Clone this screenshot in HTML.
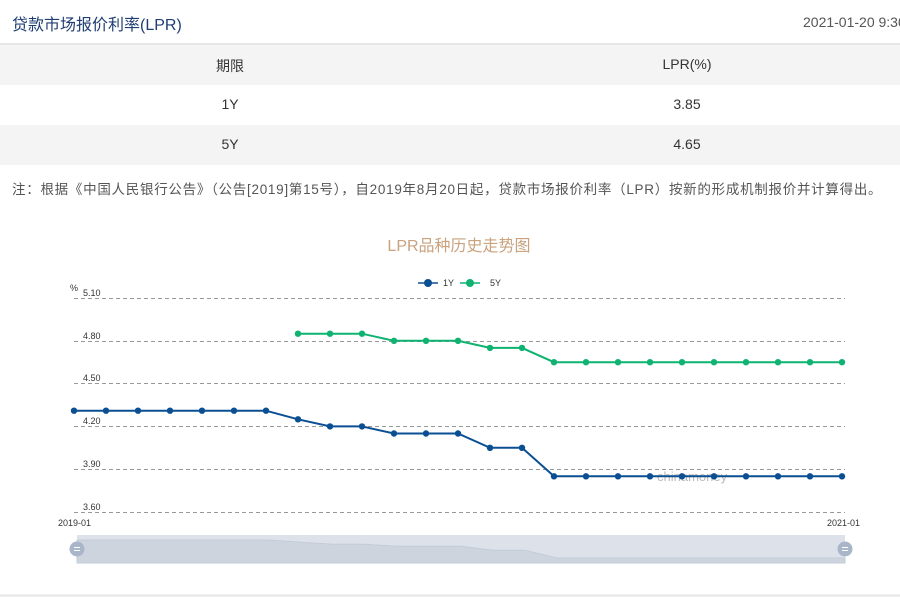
<!DOCTYPE html>
<html><head><meta charset="utf-8"><style>
*{margin:0;padding:0;box-sizing:border-box}
body{width:900px;height:597px;overflow:hidden;background:#fff;font-family:"Liberation Sans","Noto Sans CJK SC",sans-serif;position:relative;color:#333}
.abs{position:absolute}
</style></head><body>
<div class="abs" style="left:12px;top:11px;font-size:16px;color:#1f3e72">贷款市场报价利率(LPR)</div>
<div class="abs" style="left:803px;top:14px;font-size:14px;color:#555;white-space:nowrap">2021-01-20 9:30</div>
<div class="abs" style="left:0;top:43px;width:900px;height:2px;background:#e6e6e6"></div>
<div class="abs" style="left:0;top:45px;width:900px;height:40px;background:#f4f4f4"></div>
<div class="abs" style="left:0;top:125px;width:900px;height:40px;background:#f4f4f4"></div>
<div class="abs" style="left:0;top:56px;width:460px;text-align:center;font-size:14px">期限</div>
<div class="abs" style="left:460px;top:56px;width:454px;text-align:center;font-size:14px">LPR(%)</div>
<div class="abs" style="left:0;top:96px;width:460px;text-align:center;font-size:14px">1Y</div>
<div class="abs" style="left:460px;top:96px;width:454px;text-align:center;font-size:14px">3.85</div>
<div class="abs" style="left:0;top:136px;width:460px;text-align:center;font-size:14px">5Y</div>
<div class="abs" style="left:460px;top:136px;width:454px;text-align:center;font-size:14px">4.65</div>
<div class="abs" style="left:12px;top:178px;font-size:13.5px;letter-spacing:0.72px;color:#555;white-space:nowrap">注：根据《中国人民银行公告》（公告[2019]第15号），自2019年8月20日起，贷款市场报价利率（LPR）按新的形成机制报价并计算得出。</div>
<div class="abs" style="left:0;top:232px;width:918px;text-align:center;font-size:16px;color:#c9a27e">LPR品种历史走势图</div>
<svg class="abs" style="left:0;top:0" width="900" height="597" id="s">
<g stroke="#999" stroke-dasharray="4,3" stroke-width="1">
<line x1="74" x2="845" y1="298.5" y2="298.5"/><line x1="74" x2="845" y1="341.5" y2="341.5"/><line x1="74" x2="845" y1="383.5" y2="383.5"/><line x1="74" x2="845" y1="426.5" y2="426.5"/><line x1="74" x2="845" y1="469.5" y2="469.5"/><line x1="74" x2="845" y1="512.5" y2="512.5"/>
</g>
<g font-size="9" fill="#333" font-family="Liberation Sans,sans-serif">
<text x="70" y="291">%</text>
<text x="83" y="296">5.10</text><text x="83" y="339">4.80</text><text x="83" y="381">4.50</text><text x="83" y="424">4.20</text><text x="83" y="467">3.90</text><text x="83" y="510">3.60</text>
<text x="58" y="526">2019-01</text><text x="827" y="526">2021-01</text>
<text x="443" y="286">1Y</text><text x="490" y="286">5Y</text>
</g>
<text x="657" y="481" font-size="13" fill="#bbb" font-family="Liberation Sans,sans-serif">chinamoney</text>
<line x1="418" x2="438" y1="283" y2="283" stroke="#0b4f93" stroke-width="1.5"/><circle cx="428" cy="283" r="4" fill="#0b4f93"/>
<line x1="460" x2="480" y1="283" y2="283" stroke="#0fb271" stroke-width="1.5"/><circle cx="470" cy="283" r="4" fill="#0fb271"/>
<rect x="77" y="535" width="768" height="28" fill="#dde2ea"/>
<path id="mini" fill="#cdd4de" stroke="#c4ccd8"/>
<circle cx="77" cy="549" r="7.5" fill="#a9b6c9"/><circle cx="845" cy="549" r="7.5" fill="#a9b6c9"/>
<g stroke="#fff" stroke-width="1"><line x1="74" x2="80" y1="547.5" y2="547.5"/><line x1="74" x2="80" y1="550.5" y2="550.5"/><line x1="842" x2="848" y1="547.5" y2="547.5"/><line x1="842" x2="848" y1="550.5" y2="550.5"/></g>
<line x1="0" x2="900" y1="595.5" y2="595.5" stroke="#e6e6e6" stroke-width="2"/>
<g id="lines"></g>
</svg>
<script>
var y1=[4.31,4.31,4.31,4.31,4.31,4.31,4.31,4.25,4.2,4.2,4.15,4.15,4.15,4.05,4.05];while(y1.length<25)y1.push(3.85);
var y5=[null,null,null,null,null,null,null,4.85,4.85,4.85,4.8,4.8,4.8,4.75,4.75];while(y5.length<25)y5.push(4.65);
function Y(v){return 512-(v-3.6)/0.3*42.8}
var g=document.getElementById('lines'),h='';
function ser(a,c){var p=[];for(var i=0;i<25;i++)if(a[i]!=null)p.push((74+i*32)+','+Y(a[i]).toFixed(1));
h+='<polyline points="'+p.join(' ')+'" fill="none" stroke="'+c+'" stroke-width="2"/>';
p.forEach(function(q){var t=q.split(',');h+='<circle cx="'+t[0]+'" cy="'+t[1]+'" r="3.2" fill="'+c+'"/>';});}
ser(y1,'#0b4f93');ser(y5,'#0fb271');g.innerHTML=h;
var d='M77,563';for(var i=0;i<25;i++){d+=' L'+(77+i*32)+','+(540+(4.31-y1[i])/0.46*18).toFixed(1);}d+=' L845,563Z';
document.getElementById('mini').setAttribute('d',d);
</script>
</body></html>
